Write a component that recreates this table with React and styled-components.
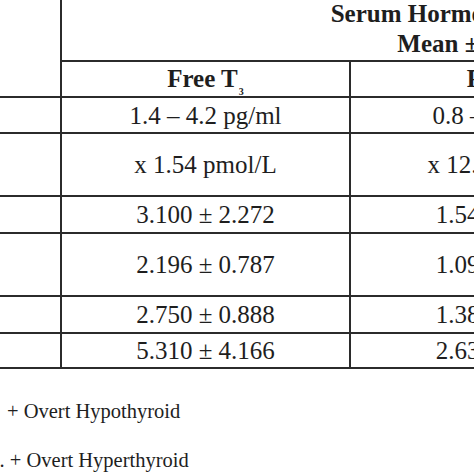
import React from "react";
import styled, { createGlobalStyle } from "styled-components";

const Global = createGlobalStyle`
  html, body { margin: 0; padding: 0; background: #fff; }
  body {
    font-family: "Liberation Serif", "Times New Roman", serif;
    color: #1e1e1e;
  }
`;

const Page = styled.div`
  width: 474px;
  height: 474px;
  overflow: hidden;
  background: #fff;
`;

const Table = styled.div`
  display: grid;
  grid-template-columns: 160px 287px 308px 191px;
  grid-template-rows: 100px 34px 34px 61px 35px 61px 35px 33px;
  gap: 2px;
  padding-bottom: 2px;
  background: #2b2b2b;
  width: max-content;
  margin: -40px 0 0 -100px;
`;

const Cell = styled.div`
  background: #fff;
  display: flex;
  align-items: center;
  justify-content: center;
  font-size: 25px;
  line-height: 1;
  white-space: nowrap;
  font-weight: ${(p) => (p.$head ? 700 : 400)};
`;

const Stub = styled(Cell)`
  grid-row: span 2;
`;

const GroupHead = styled(Cell)`
  grid-column: span 3;
  flex-direction: column;
  justify-content: flex-end;
  line-height: 30px;
  padding-bottom: 1px;
`;

const Label = styled.span`
  display: inline-block;
`;

const Sub = styled.sub`
  font-size: 10px;
  line-height: 0;
  vertical-align: -8px;
  margin-left: 1px;
`;

const Notes = styled.div`
  padding-top: 18px;
  font-size: 20.5px;
  line-height: 49px;
`;

const Note = styled.p`
  margin: 0 0 0 ${(p) => p.$shift}px;
  white-space: nowrap;
`;

const rows = [
  ["1.4 – 4.2 pg/ml", "0.8 – 1.8 ng/dl", "0.4 – 4.0 μIU/ml"],
  ["x 1.54 pmol/L", "x 12.87 pmol/L", "x 1.0 mIU/L"],
  ["3.100 ± 2.272", "1.548 ± 0.512", "2.310 ± 1.204"],
  ["2.196 ± 0.787", "1.092 ± 0.244", "8.420 ± 3.115"],
  ["2.750 ± 0.888", "1.385 ± 0.310", "1.980 ± 0.904"],
  ["5.310 ± 4.166", "2.634 ± 1.573", "0.120 ± 0.081"],
];

export default function App() {
  return (
    <Page>
      <Global />
      <Table>
        <Stub />
        <GroupHead $head>
          <span>Serum Hormone Levels</span>
          <span>Mean ± SD</span>
        </GroupHead>
        <Cell $head>
          <Label>
            Free T<Sub>3</Sub>
          </Label>
        </Cell>
        <Cell $head>
          <Label>
            Free T<Sub>4</Sub>
          </Label>
        </Cell>
        <Cell $head>
          <Label>TSH</Label>
        </Cell>
        {rows.map((r, i) => (
          <React.Fragment key={i}>
            <Cell />
            {r.map((v, j) => (
              <Cell key={j}>{v}</Cell>
            ))}
          </React.Fragment>
        ))}
      </Table>
      <Notes>
        <Note $shift={7}>+ Overt Hypothyroid</Note>
        <Note $shift={-38}>Preg. + Overt Hyperthyroid</Note>
      </Notes>
    </Page>
  );
}
